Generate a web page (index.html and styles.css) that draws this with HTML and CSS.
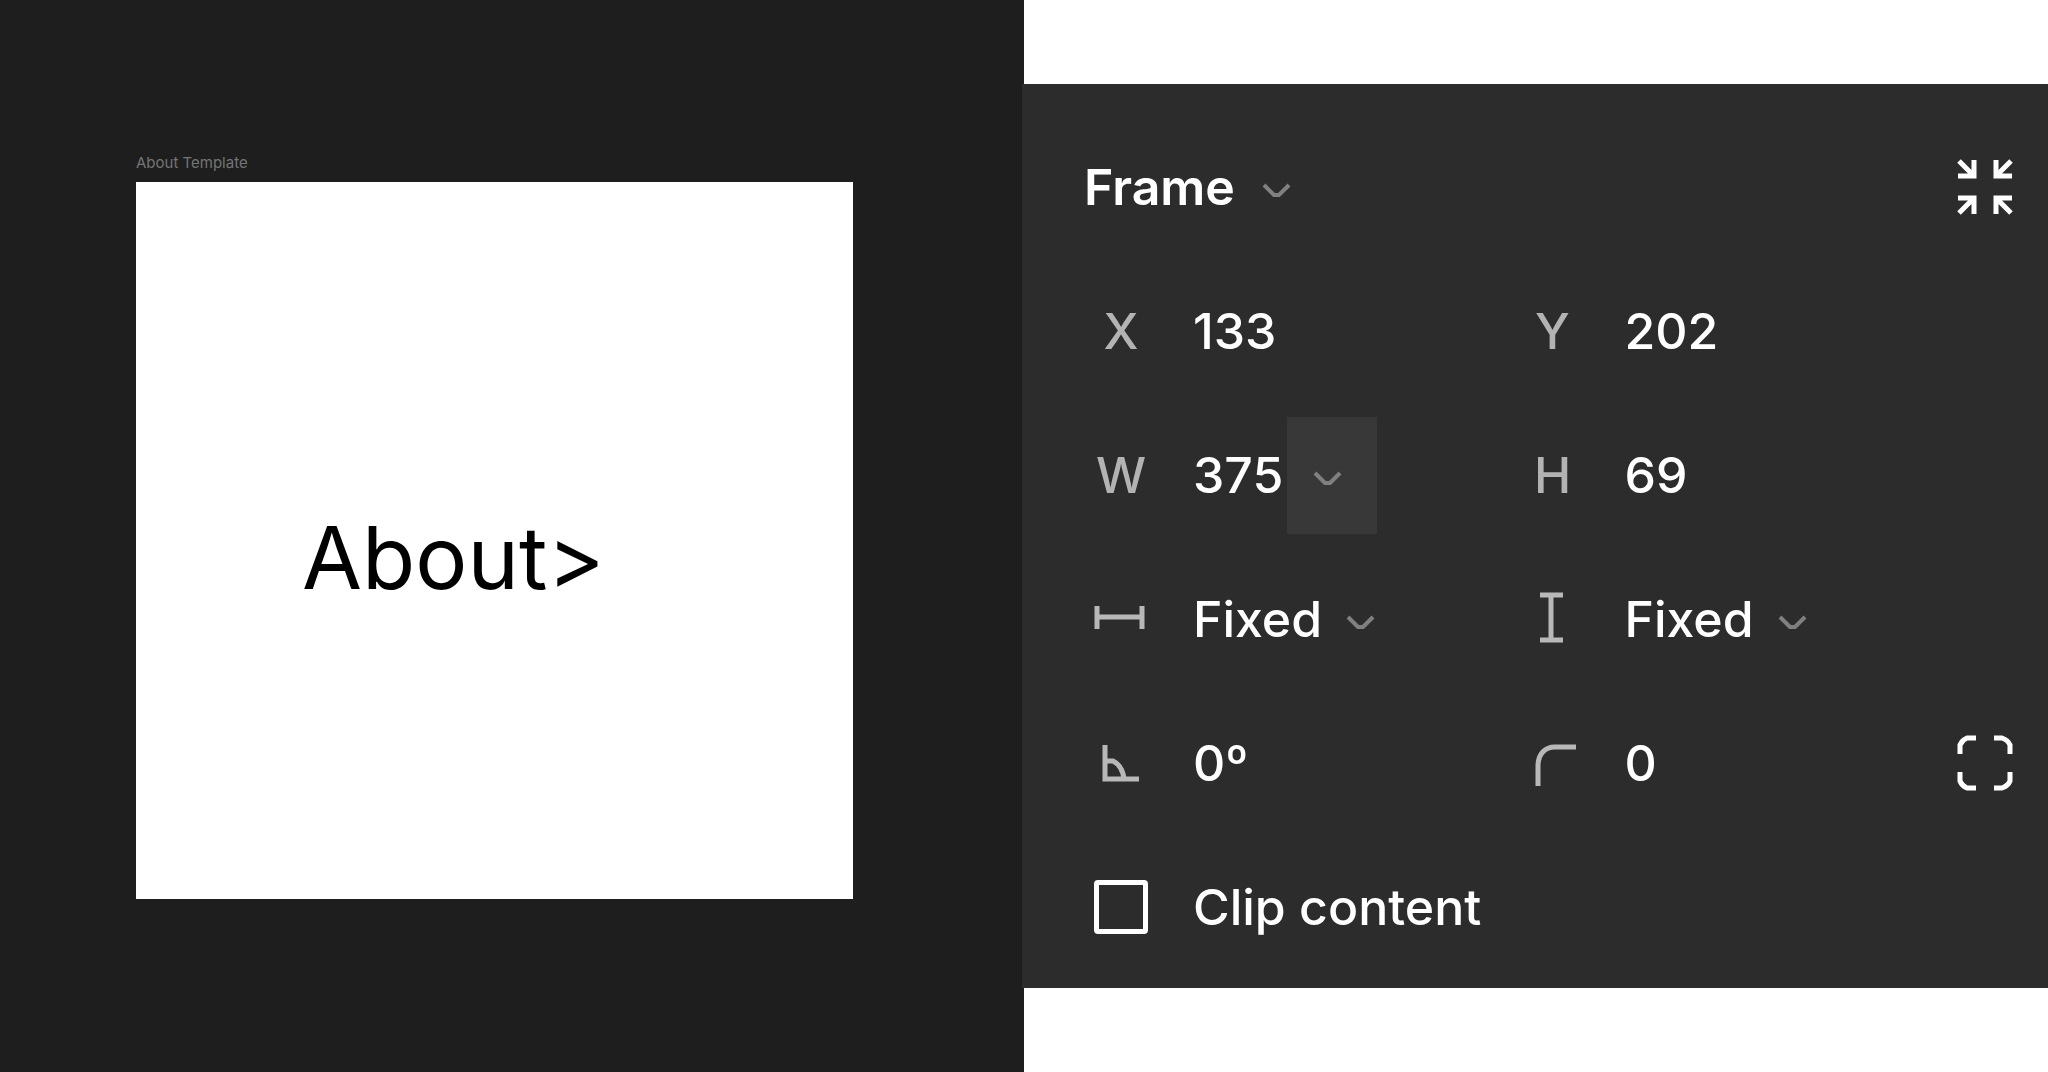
FILE: index.html
```html
<!DOCTYPE html>
<html lang="en">
<head>
    <meta charset="UTF-8">
    <meta name="viewport" content="width=device-width, initial-scale=1.0">
    <title>About Template</title>
    <link rel="stylesheet" href="styles.css">
</head>
<body>
    <main class="canvas">
        <div class="frame-name">About Template</div>
        <div class="frame">
            <a href="#about" class="about-link">About&gt;</a>
        </div>
    </main>

    <form class="panel">
        <div class="row">
            <div class="dropdown title">
                <select id="type" name="type" aria-label="Layer type">
                    <option>Frame</option>
                </select>
                <svg class="chevron" viewBox="0 0 36 24"><path d="M5 6L15 16H20L30 6"/></svg>
            </div>
            <button type="button" class="action" aria-label="Resize to fit">
                <svg class="action-icon" viewBox="0 0 72 72">
                    <path d="M9 25H25V9M10 10L24 24"/>
                    <path d="M63 25H47V9M62 10L48 24"/>
                    <path d="M9 47H25V63M10 62L24 48"/>
                    <path d="M63 47H47V63M62 62L48 48"/>
                </svg>
            </button>
        </div>

        <div class="row">
            <label for="x">X</label>
            <input type="text" id="x" name="x" value="133">
            <label for="y">Y</label>
            <input type="text" id="y" name="y" value="202">
        </div>

        <div class="row">
            <label for="width">W</label>
            <div class="field">
                <input type="text" id="width" name="width" value="375">
                <button type="button" class="menu-button" aria-label="Width options">
                    <svg class="chevron" viewBox="0 0 36 24"><path d="M5 6L15 16H20L30 6"/></svg>
                </button>
            </div>
            <label for="height">H</label>
            <input type="text" id="height" name="height" value="69">
        </div>

        <div class="row">
            <label for="resize_x" aria-label="Horizontal resizing">
                <svg class="label-icon" viewBox="0 0 54 54"><path d="M3 14V37M48 14V37M3 25H48"/></svg>
            </label>
            <div class="dropdown">
                <select id="resize_x" name="resize_x">
                    <option>Fixed</option>
                </select>
                <svg class="chevron" viewBox="0 0 36 24"><path d="M5 6L15 16H20L30 6"/></svg>
            </div>
            <label for="resize_y" aria-label="Vertical resizing">
                <svg class="label-icon" viewBox="0 0 54 54"><path d="M14 3H37M14 48H37M25 3V48"/></svg>
            </label>
            <div class="dropdown">
                <select id="resize_y" name="resize_y">
                    <option>Fixed</option>
                </select>
                <svg class="chevron" viewBox="0 0 36 24"><path d="M5 6L15 16H20L30 6"/></svg>
            </div>
        </div>

        <div class="row">
            <label for="rotation" aria-label="Rotation">
                <svg class="label-icon" viewBox="0 0 54 54"><path d="M11 9V43H45M13 25H19C25 28 29 34 30 43"/></svg>
            </label>
            <input type="text" id="rotation" name="rotation" value="0º">
            <label for="radius" aria-label="Corner radius">
                <svg class="label-icon" viewBox="0 0 54 54"><path d="M12 50V30C12 18 19 11 29 11H50"/></svg>
            </label>
            <input type="text" id="radius" name="radius" value="0">
            <button type="button" class="action" aria-label="Independent corners">
                <svg class="action-icon" viewBox="0 0 72 72">
                    <path d="M11 27V18Q13 13 18 11H27"/>
                    <path d="M45 11H53Q59 13 61 18V27"/>
                    <path d="M11 45V54Q13 59 18 61H27"/>
                    <path d="M45 61H53Q59 59 61 54V45"/>
                </svg>
            </button>
        </div>

        <div class="row">
            <input type="checkbox" id="clip" name="clip">
            <label for="clip" class="clip-label">Clip content</label>
        </div>
    </form>
</body>
</html>
```

FILE: styles.css
```css
/* General Styles */
* {
    box-sizing: border-box;
}

body {
    font-family: Inter, sans-serif;
    background: #ffffff;
    margin: 0;
    min-height: 100vh;
    display: flex;
    align-items: center;
}

/* Canvas */
.canvas {
    width: 50%;
    min-height: 100vh;
    flex-shrink: 0;
    display: flex;
    flex-direction: column;
    justify-content: center;
    padding-left: 136px;
    background: #1e1e1e;
}

.frame-name {
    height: 28px;
    font-size: 15px;
    line-height: 18px;
    color: #757575;
}

.frame {
    width: 717px;
    max-width: 100%;
    aspect-ratio: 1;
    margin-bottom: 20px;
    padding: 36px 0 0 166px;
    display: flex;
    align-items: center;
    background: #ffffff;
}

.about-link {
    font-size: 87px;
    line-height: 100px;
    color: #000000;
    text-decoration: none;
}

/* Properties Panel */
.panel {
    flex: 1;
    min-width: 0;
    margin-left: -2px;
    padding: 31px 18px 9px 55px;
    background: #2c2c2c;
    color: #ffffff;
    font-size: 50px;
    font-weight: 500;
}

.row {
    display: grid;
    grid-template-columns: 88px 1fr 88px 1fr 90px;
    column-gap: 28px;
    align-items: center;
    height: 144px;
}

label {
    display: flex;
    justify-content: center;
    color: #b3b3b3;
}

input[type="text"],
select {
    min-width: 0;
    padding: 0;
    border: none;
    background: none;
    color: #ffffff;
    font: inherit;
    line-height: 60px;
    appearance: none;
}

.field,
.dropdown {
    display: flex;
    align-items: center;
}

.dropdown {
    gap: 20px;
}

.field input {
    width: 94px;
}

.title {
    grid-column: 1 / 5;
    gap: 24px;
    padding-left: 7px;
    font-weight: 600;
}

.menu-button {
    width: 90px;
    height: 117px;
    flex-shrink: 0;
    padding: 0 27px 0 23px;
    border: none;
    background: #383838;
}

.action {
    grid-column: 5;
    display: flex;
    justify-content: center;
    padding: 0;
    border: none;
    background: none;
}

/* Icons */
svg {
    display: block;
    fill: none;
    stroke-width: 5px;
}

.chevron {
    width: 36px;
    height: 24px;
    margin-top: 8px;
    stroke: #808080;
    stroke-width: 4px;
}

.label-icon {
    width: 54px;
    height: 54px;
    stroke: #b8b8b8;
}

.action-icon {
    width: 72px;
    height: 72px;
    stroke: #ffffff;
}

/* Clip Content */
input[type="checkbox"] {
    width: 54px;
    height: 54px;
    margin: 0;
    justify-self: center;
    border: 5px solid #ffffff;
    border-radius: 4px;
    appearance: none;
}

.clip-label {
    grid-column: 2 / 6;
    justify-content: flex-start;
    color: #ffffff;
}
```
